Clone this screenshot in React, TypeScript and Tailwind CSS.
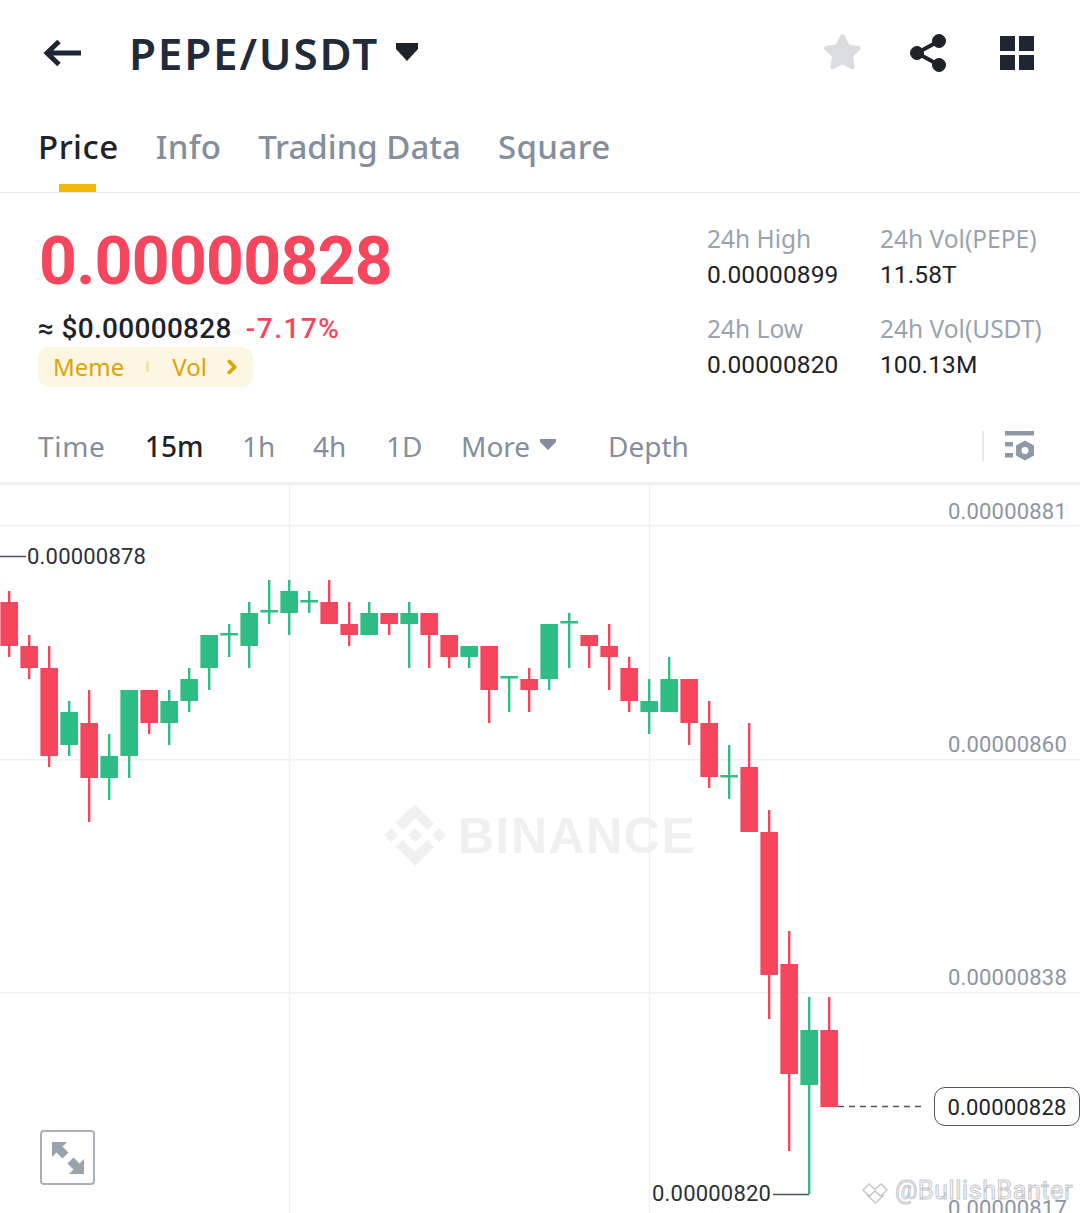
// PEPE/USDT price screen with a static candlestick chart.
import { ChevronRight, Star } from "lucide-react";

const UP = "#2ebd85";
const DOWN = "#f6465d";

// [up?, wickTop, wickBottom, bodyTop, bodyBottom], read off the chart in px
type Candle = [boolean, number, number, number, number];
const CANDLES: Candle[] = [
  [false, 591, 657, 602, 646],
  [false, 635, 679, 646, 668],
  [false, 646, 767, 668, 756],
  [true, 701, 756, 712, 745],
  [false, 690, 822, 723, 778],
  [true, 734, 800, 756, 778],
  [true, 690, 778, 690, 756],
  [false, 690, 734, 690, 723],
  [true, 690, 745, 701, 723],
  [true, 668, 712, 679, 701],
  [true, 635, 690, 635, 668],
  [true, 624, 657, 633, 635.5],
  [true, 602, 668, 613, 646],
  [true, 580, 624, 610, 612.5],
  [true, 580, 635, 591, 613],
  [true, 591, 613, 600, 602.5],
  [false, 580, 624, 602, 624],
  [false, 602, 646, 624, 635],
  [true, 602, 635, 613, 635],
  [false, 613, 635, 613, 624],
  [true, 602, 668, 613, 624],
  [false, 613, 668, 613, 635],
  [false, 635, 668, 635, 657],
  [true, 646, 668, 646, 657],
  [false, 646, 723, 646, 690],
  [true, 676, 712, 676, 678.5],
  [false, 668, 712, 679, 690],
  [true, 624, 690, 624, 679],
  [true, 613, 668, 621, 623.5],
  [false, 635, 668, 635, 646],
  [false, 624, 690, 646, 657],
  [false, 657, 712, 668, 701],
  [true, 679, 734, 701, 712],
  [true, 657, 712, 679, 712],
  [false, 679, 745, 679, 723],
  [false, 701, 788, 723, 777],
  [true, 745, 799, 775, 777.5],
  [false, 723, 832, 767, 832],
  [false, 810, 1019, 832, 975],
  [false, 931, 1151, 964, 1074],
  [true, 997, 1194, 1030, 1085],
  [false, 997, 1107, 1030, 1107],
];

const CHART_TOP = 485;
const BINANCE_LOGO =
  "M38.73 53.2l24.59-24.58 24.6 24.6 14.3-14.31L63.32 0 24.42 38.9zM0 63.31L14.3 49l14.31 14.31-14.31 14.3zM38.73 73.41l24.59 24.59 24.6-24.6 14.31 14.29-38.9 38.91-38.91-38.88zM98 63.31l14.3-14.31 14.31 14.3-14.31 14.31zM77.83 63.3L63.32 48.78 52.59 59.51l-1.24 1.23-2.54 2.54 14.51 14.5 14.51-14.47z";

export default function App() {
  return (
    <div className="h-[1213px] w-[1080px] overflow-hidden bg-white font-['Noto_Sans',sans-serif] text-[#1e2329]">
      <Header />
      <Tabs />
      <Summary />
      <Timeframes />
      <Chart />
    </div>
  );
}

function Header() {
  return (
    <header className="flex h-[105px] items-center pl-[43px] pr-[46px]">
      <svg width="40" height="30" viewBox="0 0 40 30" fill="none" stroke="#1e2633" strokeWidth="5">
        <path d="M38 15H5M16 3.5 4 15l12 11.5" />
      </svg>
      <h1 className="ml-[46px] text-[44px] leading-none font-semibold tracking-[1.8px] text-[#222b3a]">PEPE/USDT</h1>
      <svg className="ml-[16px] -mt-[2px]" width="24" height="18" viewBox="0 0 24 18" fill="#1e2329">
        <path d="M1 0h22v6L12 18 1 6z" />
      </svg>
      <Star className="ml-auto h-[41px] w-[41px]" fill="#d9dce0" stroke="#d9dce0" strokeWidth={1.5} />
      <svg className="ml-[47px]" width="38" height="38" viewBox="0 0 38 38" fill="#1e2329" stroke="#1e2329">
        <circle cx="29" cy="7" r="6.5" />
        <circle cx="29" cy="31" r="6.5" />
        <circle cx="7" cy="19" r="6.5" />
        <path d="M29 7 7 19l22 12" fill="none" strokeWidth="4" />
      </svg>
      <svg className="ml-[52px]" width="34" height="34" viewBox="0 0 34 34" fill="#1e2633">
        <rect width="15" height="15" />
        <rect x="19" width="15" height="15" />
        <rect y="19" width="15" height="15" />
        <rect x="19" y="19" width="15" height="15" />
      </svg>
    </header>
  );
}

function Tabs() {
  return (
    <nav className="flex h-[88px] gap-[37px] border-b border-[#eaecef] pl-[38px] text-[33px] leading-none font-medium text-[#848e9c]">
      <div className="relative h-full pt-[25px] tracking-[0.5px] text-[#1e2329]">
        Price
        <span className="absolute bottom-0 left-[21px] h-[8px] w-[37px] bg-[#f0b90b]" />
      </div>
      <div className="pt-[25px] tracking-[0.3px]">Info</div>
      <div className="pt-[25px]">Trading Data</div>
      <div className="pt-[25px] tracking-[0.4px]">Square</div>
    </nav>
  );
}

function Stat({ label, value }: { label: string; value: string }) {
  return (
    <div className="h-[90px] pt-[27px] whitespace-nowrap">
      <div className="text-[24.5px] leading-[34px] text-[#9ba3af]">{label}</div>
      <div className="mt-[2px] font-['Roboto',sans-serif] text-[24.5px] leading-[34px] tracking-[0.1px]">{value}</div>
    </div>
  );
}

function Summary() {
  return (
    <section className="flex h-[222px] justify-between pl-[38px] pr-[38px]">
      <div>
        <div className="mt-[29px] ml-[1px] font-['Roboto',sans-serif] text-[66px] leading-[80px] font-bold tracking-[-0.7px] text-[#f6465d]">0.00000828</div>
        <div className="mt-[9px] flex items-center font-['Roboto',sans-serif] text-[28px] leading-[36px]">
          <span className="font-medium tracking-[0.3px]">≈ $0.00000828</span>
          <span className="ml-[14px] font-medium tracking-[1.5px] text-[#f6465d]">-7.17%</span>
        </div>
        <div className="flex h-[40px] w-[215px] items-center rounded-[12px] bg-[#fdf6e3] pl-[15px] text-[24px] text-[#dba507]">
          Meme
          <span className="ml-[22px] h-[10px] w-[3px] bg-[#f3e2a8]" />
          <span className="ml-[23px]">Vol</span>
          <ChevronRight className="ml-[14px]" size={22} strokeWidth={4} />
        </div>
      </div>
      <div className="mt-[2px] grid w-[335px] grid-cols-[173px_1fr] content-start">
        <Stat label="24h High" value="0.00000899" />
        <Stat label="24h Vol(PEPE)" value="11.58T" />
        <Stat label="24h Low" value="0.00000820" />
        <Stat label="24h Vol(USDT)" value="100.13M" />
      </div>
    </section>
  );
}

function Timeframes() {
  return (
    <div className="flex h-[70px] items-center border-b-[3px] border-[#f0f1f3] pb-[5px] pl-[38px] pr-[45px] text-[28px] leading-none text-[#848e9c]">
      <span className="w-[107px] tracking-[0.7px]">Time</span>
      <span className="w-[97px] font-medium text-[#1e2329]">15m</span>
      <span className="w-[71px]">1h</span>
      <span className="w-[73px]">4h</span>
      <span className="w-[75px]">1D</span>
      <span className="w-[79px]">More</span>
      <svg className="-mt-[5px]" width="16" height="12" viewBox="0 0 16 12" fill="#848e9c">
        <path d="M0 1h16v3l-8 8-8-8z" />
      </svg>
      <span className="ml-[52px]">Depth</span>
      <span className="ml-auto h-[30px] w-[2px] bg-[#e6e8ea]" />
      <svg className="ml-[21px]" width="30" height="30" viewBox="0 0 30 30" fill="#8f98a6">
        <rect width="29" height="4.5" />
        <rect y="11" width="8" height="4.5" />
        <rect y="22" width="8" height="4.5" />
        <path fillRule="evenodd" d="M20 9.5l9 5v10l-9 5-9-5v-10zM20 16a3.5 3.5 0 1 0 0 7 3.5 3.5 0 0 0 0-7z" />
      </svg>
    </div>
  );
}

function Chart() {
  return (
    <div className="relative h-[728px] overflow-hidden">
      <svg className="absolute top-0 left-0" width="1080" height="728" viewBox={`0 ${CHART_TOP} 1080 728`}>
        {[526, 760, 993].map((y) => (
          <rect key={y} x="0" y={y - 1} width="1080" height="1.5" fill="#eff1f3" />
        ))}
        {[288.8, 648.8].map((x) => (
          <rect key={x} x={x} y={CHART_TOP} width="1.5" height="728" fill="#eff1f3" />
        ))}
        <path d={BINANCE_LOGO} fill="#eff0f1" transform="translate(384 804) scale(0.49)" />
        {CANDLES.map(([up, wt, wb, bt, bb], i) => {
          const x = 9.2 + 20 * i;
          const color = up ? UP : DOWN;
          return (
            <g key={i} fill={color}>
              <rect x={x - 1.2} y={wt} width="2.4" height={wb - wt} />
              <rect x={x - 8.8} y={bt} width="17.6" height={bb - bt} />
            </g>
          );
        })}
        <path d="M0 556.5h26M773 1194.5h36" stroke="#50565f" strokeWidth="1.5" />
        <path d="M838 1106.5h86" stroke="#50565f" strokeWidth="1.5" strokeDasharray="6 5" />
        {/* source mark next to the handle */}
        <g fill="none" stroke="#c4c7cb" strokeWidth="1.5">
          <path d="M863 1190l6-6 6 5.5 6-5.5 6 6-6.500 6-5.500-5-5.500 5zM867 1195l8.500 8 8.500-8" />
        </g>
      </svg>

      <span className="absolute top-[326px] left-[458px] font-['Liberation_Sans',sans-serif] text-[50px] leading-none font-bold tracking-[1.5px] text-[#eff0f1]">
        BINANCE
      </span>

      <PriceLabel top={13} text="0.00000881" />
      <PriceLabel top={246} text="0.00000860" />
      <PriceLabel top={479} text="0.00000838" />
      <PriceLabel top={710} text="0.00000817" />

      <span className="absolute top-[58px] left-[27px] font-['Roboto',sans-serif] text-[22px] leading-[28px] tracking-[0.2px] text-[#2b3139]">
        0.00000878
      </span>
      <span className="absolute top-[695px] left-[652px] font-['Roboto',sans-serif] text-[22px] leading-[28px] tracking-[0.2px] text-[#2b3139]">
        0.00000820
      </span>
      <span className="absolute top-[602px] left-[934px] flex h-[39px] w-[146px] items-center justify-center rounded-[11px] border-[1.5px] border-[#50565f] bg-white pt-[2px] font-['Roboto',sans-serif] text-[22px] tracking-[0.2px] text-[#1e2329]">
        0.00000828
      </span>

      <span className="absolute top-[691px] left-[895px] font-['Roboto',sans-serif] text-[25px] leading-[30px] tracking-[0.6px] text-white [-webkit-text-stroke:1px_#c4c7cb]">
        @BullishBanter
      </span>

      <button className="absolute top-[645px] left-[40px] flex h-[55px] w-[55px] items-center justify-center rounded-[4px] border-2 border-[#aab0ba] bg-white">
        <svg width="32" height="32" viewBox="0 0 32 32" fill="#9aa2ad">
          <path d="M0 0h15l-4.500 4.500 6 6-6 6-6-6L0 15zM32 32H17l4.500-4.500-6-6 6-6 6 6L32 17z" />
        </svg>
      </button>
    </div>
  );
}

function PriceLabel({ top, text }: { top: number; text: string }) {
  return (
    <span
      className="absolute right-[13px] font-['Roboto',sans-serif] text-[22px] leading-[28px] tracking-[0.2px] text-[#8d95a1]"
      style={{ top }}
    >
      {text}
    </span>
  );
}
